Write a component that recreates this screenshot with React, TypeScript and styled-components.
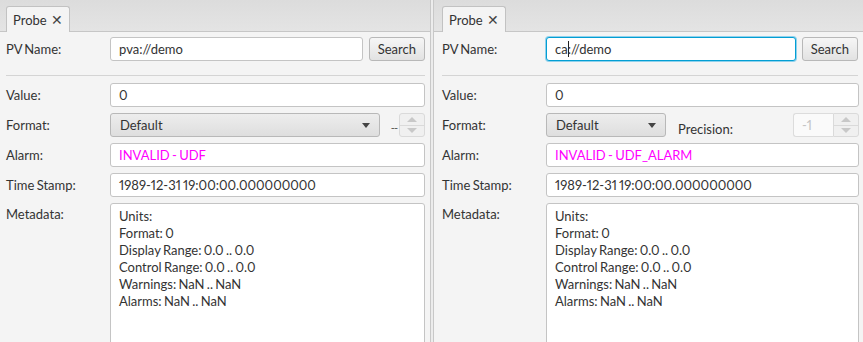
import React from "react";
import styled, { createGlobalStyle, css } from "styled-components";

const Global = createGlobalStyle`
  html, body { margin: 0; padding: 0; background: #f4f4f4; }
  body {
    font-family: Lato, "Open Sans", sans-serif;
    font-size: 13px;
    color: #333;
    font-variant-numeric: proportional-nums;
    word-spacing: -1px;
  }
  * { box-sizing: border-box; }
`;

const Window = styled.div`
  display: flex;
  width: 863px;
  height: 342px;
  overflow: hidden;
  background: #f4f4f4;
`;

const Pane = styled.div<{ $w: number }>`
  width: ${(p) => p.$w}px;
  flex: none;
  display: flex;
  flex-direction: column;
`;

const Divider = styled.div`
  width: 4px;
  flex: none;
  background: #ececec;
  border-left: 1px solid #c8c8c8;
  border-right: 1px solid #c8c8c8;
`;

const TabBar = styled.div<{ $pl: number }>`
  height: 32px;
  flex: none;
  display: flex;
  align-items: flex-end;
  padding-left: ${(p) => p.$pl}px;
  background: linear-gradient(#dcdcdc, #e4e4e4);
  border-bottom: 1px solid #c6c6c6;
`;

const Tab = styled.div`
  height: 26px;
  margin-bottom: -1px;
  padding: 0 6px;
  display: flex;
  align-items: center;
  gap: 4px;
  background: #f4f4f4;
  border: 1px solid #c2c2c2;
  border-bottom: none;
  border-radius: 3px 3px 0 0;
  color: #333;
`;

const Close = styled.span`
  font-size: 14px;
  color: #444;
`;

const Content = styled.div<{ $pl: number }>`
  flex: 1;
  padding: 5px 5px 0 ${(p) => p.$pl}px;
  display: flex;
  flex-direction: column;
`;

const TopRow = styled.div<{ $lw: number }>`
  display: grid;
  grid-template-columns: ${(p) => p.$lw}px 1fr auto;
  column-gap: 6px;
  align-items: center;
  height: 24px;
`;

const Sep = styled.div`
  height: 1px;
  background: #d4d4d4;
  margin: 14px 0 7px;
`;

const Form = styled.div<{ $lw: number }>`
  display: grid;
  grid-template-columns: ${(p) => p.$lw}px 1fr;
  grid-auto-rows: 24px;
  row-gap: 6px;
  align-items: center;
`;

const Label = styled.div<{ $top?: boolean }>`
  color: #333;
  white-space: nowrap;
  ${(p) => p.$top && css`align-self: start; padding-top: 3px;`}
`;

const Field = styled.div<{ $focus?: boolean; $alarm?: boolean }>`
  height: 24px;
  background: #fff;
  border: 1px solid #c4c4c4;
  border-radius: 3px;
  padding: 0 8px;
  display: flex;
  align-items: center;
  color: ${(p) => (p.$alarm ? "#ff00ff" : "#333")};
  white-space: nowrap;
  ${(p) =>
    p.$focus &&
    css`
      border-color: #039ed3;
      box-shadow: 0 0 0 1px #8fd1ec;
    `}
`;

const Caret = styled.span`
  display: inline-block;
  width: 1px;
  height: 16px;
  background: #222;
  margin: 0 -1px 0 0;
`;

const Button = styled.div`
  height: 24px;
  padding: 0 8px;
  display: flex;
  align-items: center;
  border: 1px solid #b8b8b8;
  border-radius: 3px;
  background: linear-gradient(#f6f6f6, #e2e2e2);
  color: #333;
`;

const FormatRow = styled.div`
  display: flex;
  align-items: center;
  height: 24px;
`;

const Combo = styled.div<{ $w?: number }>`
  height: 24px;
  ${(p) => (p.$w ? css`width: ${p.$w}px;` : css`flex: 1;`)}
  display: flex;
  align-items: center;
  justify-content: space-between;
  padding: 0 9px;
  border: 1px solid #b8b8b8;
  border-radius: 3px;
  background: linear-gradient(#ededed, #dedede);
  color: #333;
`;

const Arrow = styled.span`
  width: 0;
  height: 0;
  border-left: 4px solid transparent;
  border-right: 4px solid transparent;
  border-top: 5px solid #444;
`;

const PrecLabel = styled.div<{ $w: number }>`
  width: ${(p) => p.$w}px;
  padding-left: 12px;
  align-self: flex-end;
  overflow: hidden;
  white-space: nowrap;
  color: #333;
`;

const Dots = styled.div`
  width: 19px;
  align-self: flex-end;
  padding-bottom: 3px;
  text-align: right;
  padding-right: 2px;
  color: #555;
  font-size: 11px;
  letter-spacing: -1px;
`;

const SpinText = styled.div`
  width: 40px;
  height: 24px;
  border: 1px solid #dcdcdc;
  border-right: none;
  border-radius: 3px 0 0 3px;
  background: #fafafa;
  color: #c4c4c4;
  display: flex;
  align-items: center;
  padding-left: 8px;
`;

const SpinButtons = styled.div<{ $dim?: boolean }>`
  width: 26px;
  height: 24px;
  display: flex;
  flex-direction: column;
  border: 1px solid #dadada;
  border-radius: ${(p) => (p.$dim ? "0 3px 3px 0" : "3px")};
  background: #f0f0f0;
  overflow: hidden;
`;

const SpinBtn = styled.div<{ $down?: boolean }>`
  flex: 1;
  display: flex;
  align-items: center;
  justify-content: center;
  ${(p) => p.$down && css`border-top: 1px solid #dadada;`}
  &::after {
    content: "";
    border-left: 5px solid transparent;
    border-right: 5px solid transparent;
    ${(p) =>
      p.$down
        ? css`border-top: 5px solid #c8c8c8;`
        : css`border-bottom: 5px solid #c8c8c8;`}
  }
`;

const MetaBox = styled.div`
  height: 160px;
  background: #fff;
  border: 1px solid #c4c4c4;
  border-radius: 3px;
  padding: 4px 8px;
  line-height: 17px;
  color: #333;
  align-self: start;
`;

const metaLines = [
  "Units:",
  "Format: 0",
  "Display Range: 0.0 .. 0.0",
  "Control Range: 0.0 .. 0.0",
  "Warnings: NaN .. NaN",
  "Alarms: NaN .. NaN",
];

type PaneProps = {
  width: number;
  tabPad: number;
  pad: number;
  labelW: number;
  pv: React.ReactNode;
  focus?: boolean;
  alarm: string;
  right?: boolean;
};

function ProbePane({ width, tabPad, pad, labelW, pv, focus, alarm, right }: PaneProps) {
  return (
    <Pane $w={width}>
      <TabBar $pl={tabPad}>
        <Tab>
          Probe <Close>✕</Close>
        </Tab>
      </TabBar>
      <Content $pl={pad}>
        <TopRow $lw={labelW - 6}>
          <Label>PV Name:</Label>
          <Field $focus={focus}>{pv}</Field>
          <Button>Search</Button>
        </TopRow>
        <Sep />
        <Form $lw={labelW}>
          <Label>Value:</Label>
          <Field>0</Field>
          <Label>Format:</Label>
          {right ? (
            <FormatRow>
              <Combo $w={120}>
                Default <Arrow />
              </Combo>
              <PrecLabel $w={127}>Precision:</PrecLabel>
              <SpinText>-1</SpinText>
              <SpinButtons $dim>
                <SpinBtn />
                <SpinBtn $down />
              </SpinButtons>
            </FormatRow>
          ) : (
            <FormatRow>
              <Combo>
                Default <Arrow />
              </Combo>
              <Dots>--</Dots>
              <SpinButtons>
                <SpinBtn />
                <SpinBtn $down />
              </SpinButtons>
            </FormatRow>
          )}
          <Label>Alarm:</Label>
          <Field $alarm>{alarm}</Field>
          <Label>Time Stamp:</Label>
          <Field>1989-12-31 19:00:00.000000000</Field>
          <Label $top>Metadata:</Label>
          <MetaBox>
            {metaLines.map((l) => (
              <div key={l}>{l}</div>
            ))}
          </MetaBox>
        </Form>
      </Content>
    </Pane>
  );
}

export default function App() {
  return (
    <>
      <Global />
      <Window>
        <ProbePane
          width={430}
          tabPad={6}
          pad={6}
          labelW={104}
          pv="pva://demo"
          alarm="INVALID - UDF"
        />
        <Divider />
        <ProbePane
          width={429}
          tabPad={8}
          pad={8}
          labelW={104}
          pv={
            <>
              ca<Caret />://demo
            </>
          }
          focus
          alarm="INVALID - UDF_ALARM"
          right
        />
      </Window>
    </>
  );
}
